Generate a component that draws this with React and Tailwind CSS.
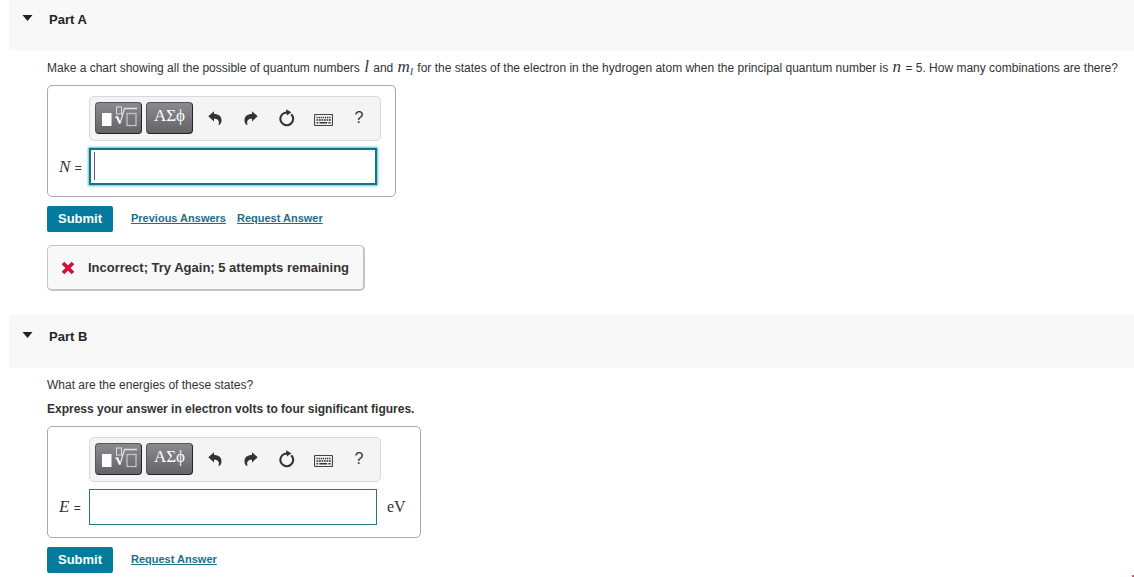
import React, { useState } from 'react';

function UndoIcon({ flipped }) {
    return (
        <svg width="14" height="14" viewBox="0 0 14 14" className={flipped ? '-scale-x-100' : ''}>
            <path
                d="M0.3 5.2 L6 0.2 V3 C10.5 3 13.5 5.2 13.5 9.2 C13.5 10.9 13 12.4 11.7 13.8 L10.4 13.8 C11 12.4 11.1 11.2 10.6 10 C9.9 8.4 8.5 7.8 6 7.8 V10.4 Z"
                fill="#333"
            />
        </svg>
    );
}

function ResetIcon() {
    return (
        <svg width="16" height="18" viewBox="0 0 16 18">
            <path d="M12.2 5.2 A6.4 6.4 0 1 1 5.4 3.9 L8.3 3.4" fill="none" stroke="#333" strokeWidth="2.1" />
            <path d="M7 0.2 L12.4 3.2 L8 6.6 Z" fill="#333" />
        </svg>
    );
}

function KeyboardIcon() {
    return (
        <svg width="19" height="12" viewBox="0 0 19 12">
            <rect x="0.5" y="0.5" width="18" height="11" rx="1" fill="#f4f4f4" stroke="#444" strokeWidth="1.2" />
            <path d="M2.5 3.5 H17" stroke="#333" strokeWidth="1.4" strokeDasharray="1.3 0.8" />
            <path d="M2.5 6 H17" stroke="#333" strokeWidth="1.4" strokeDasharray="1.8 0.7" />
            <path d="M2.5 8.8 H4.2 M5.4 8.8 H13.2 M14.4 8.8 H16.6" stroke="#333" strokeWidth="1.4" />
        </svg>
    );
}

function TemplateIcon() {
    return (
        <svg width="37" height="22" viewBox="0 0 37 22">
            <rect x="2" y="7" width="9.5" height="13" fill="#fff" />
            <rect x="16.5" y="1" width="5" height="7" fill="none" stroke="#ddd" strokeWidth="1" />
            <path d="M15 11.5 L17 10.5" fill="none" stroke="#eee" strokeWidth="1" />
            <path d="M17 10.5 L20 17.5" fill="none" stroke="#fff" strokeWidth="2" />
            <path d="M20 17.5 L24.5 2.5 H37" fill="none" stroke="#e4e4e4" strokeWidth="1.3" />
            <rect x="27" y="7.5" width="9" height="12" fill="none" stroke="#c4c4c4" strokeWidth="1.3" />
        </svg>
    );
}

function Toolbar() {
    const dark =
        'w-[47px] h-8 flex items-center justify-center rounded border border-[#55555a] border-r-[#222] border-b-[#222] bg-linear-to-b from-[#8b8b8f] to-[#646468] text-white';
    const plain = 'w-9 h-8 flex items-center justify-center text-[#333]';

    return (
        <div className="flex items-center w-fit h-[45px] pl-[5px] pr-[3px] pb-0.5 rounded-[5px] border border-[#d9d9dc] bg-[#f4f4f4]">
            <button type="button" aria-label="Templates" className={`${dark} pb-px`}>
                <TemplateIcon />
            </button>
            <button type="button" aria-label="Symbols" className={`${dark} mx-1 pb-1 font-['Liberation_Serif',serif] text-[17px] leading-none`}>
                ΑΣϕ
            </button>
            <button type="button" aria-label="Undo" className={plain}>
                <UndoIcon />
            </button>
            <button type="button" aria-label="Redo" className={plain}>
                <UndoIcon flipped />
            </button>
            <button type="button" aria-label="Reset" className={plain}>
                <ResetIcon />
            </button>
            <button type="button" aria-label="Keyboard shortcuts" className={`${plain} pt-1`}>
                <KeyboardIcon />
            </button>
            <button type="button" aria-label="Help" className={`${plain} text-base`}>
                ?
            </button>
        </div>
    );
}

function MathVar({ children }) {
    return <i className="mx-px font-['Liberation_Serif',serif] text-[17px] leading-none">{children}</i>;
}

function AnswerBox({ id, variable, unit, active }) {
    const [value, setValue] = useState('');

    return (
        <div className="w-fit h-28 pt-2.5 pl-2.5 pr-3.5 rounded-[5px] border border-[#aaa]">
            <div className="pl-[31px]">
                <Toolbar />
            </div>
            <div className="flex items-center mt-[7px]">
                <label htmlFor={id} className="w-[31px] text-xs whitespace-nowrap">
                    <MathVar>{variable}</MathVar> =
                </label>
                <div className="relative">
                    <input
                        id={id}
                        type="text"
                        value={value}
                        onChange={e => setValue(e.target.value)}
                        className={
                            active
                                ? 'block w-72 h-[37px] px-1 border-2 border-[#14757f] bg-white shadow-[0_0_2px_1px_#5cc3d6] outline-none caret-transparent'
                                : 'block w-72 h-9 px-1 border border-[#24768a] bg-white outline-none'
                        }
                    />
                    {active && value === '' && <span className="absolute left-[5px] top-1 w-px h-7 bg-[#47628c]" />}
                </div>
                {unit && <span className="ml-2.5 font-['Liberation_Serif',serif] text-base leading-none">{unit}</span>}
            </div>
        </div>
    );
}

function Actions({ links }) {
    return (
        <div className="flex items-center mt-[9px]">
            <button type="submit" className="w-[66px] h-[26px] mr-[18px] rounded-xs bg-[#047a9c] text-[13px] font-bold text-white">
                Submit
            </button>
            <div className="flex gap-[11px] pb-0.5 text-[11px] font-bold text-[#1c6f87]">
                {links.map(link => (
                    <a key={link} href="#" className="underline">
                        {link}
                    </a>
                ))}
            </div>
        </div>
    );
}

function PartHeader({ title, className }) {
    return (
        <button type="button" className={`flex items-start w-full bg-[#f8f8f8] pl-[13px] text-left text-[#252525] ${className}`}>
            <svg width="11" height="6" viewBox="0 0 11 6" className="mt-[5px] mr-4">
                <path d="M0.5 0 H10.5 L5.5 6 Z" fill="#222" />
            </svg>
            <h2 className="text-[13px] leading-5 font-bold">{title}</h2>
        </button>
    );
}

export default function App() {
    return (
        <div className="relative min-h-screen pl-[9px] overflow-hidden bg-white font-['Liberation_Sans',Arial,sans-serif] text-xs text-[#333]">
            <section>
                <PartHeader title="Part A" className="h-[50px] pt-2.5" />
                <form className="pl-[38px]" onSubmit={e => e.preventDefault()}>
                    <p className="pt-2 pb-[7px] leading-5">
                        Make a chart showing all the possible of quantum numbers <MathVar>l</MathVar> and{' '}
                        <MathVar>
                            m<sub className="text-[11px]">l</sub>
                        </MathVar>{' '}
                        for the states of the electron in the hydrogen atom when the principal quantum number is <MathVar>n</MathVar> = 5. How many
                        combinations are there?
                    </p>
                    <AnswerBox id="answer-n" variable="N" active />
                    <Actions links={['Previous Answers', 'Request Answer']} />
                    <div className="flex items-center w-fit h-[46px] mt-[13px] pl-[13px] pr-3.5 rounded-[5px] border border-b-2 border-r-2 border-[#c4c4c4] bg-[#f8f8f8]">
                        <svg width="14" height="14" viewBox="0 0 14 14" className="mr-[13px]">
                            <path d="M2 2 L12 12 M12 2 L2 12" stroke="#d0103a" strokeWidth="3.8" />
                        </svg>
                        <span className="pt-px text-[13px] font-bold">Incorrect; Try Again; 5 attempts remaining</span>
                    </div>
                </form>
            </section>

            <section className="mt-6">
                <PartHeader title="Part B" className="h-[53px] pt-3" />
                <form className="pl-[38px]" onSubmit={e => e.preventDefault()}>
                    <p className="pt-[7px] leading-5">What are the energies of these states?</p>
                    <p className="pt-1 pb-[7px] leading-5 font-bold">Express your answer in electron volts to four significant figures.</p>
                    <AnswerBox id="answer-e" variable="E" unit="eV" />
                    <Actions links={['Request Answer']} />
                </form>
            </section>

            <span className="absolute right-0 bottom-0 w-0.5 h-0.5 bg-[#e0506a]" />
        </div>
    );
}
